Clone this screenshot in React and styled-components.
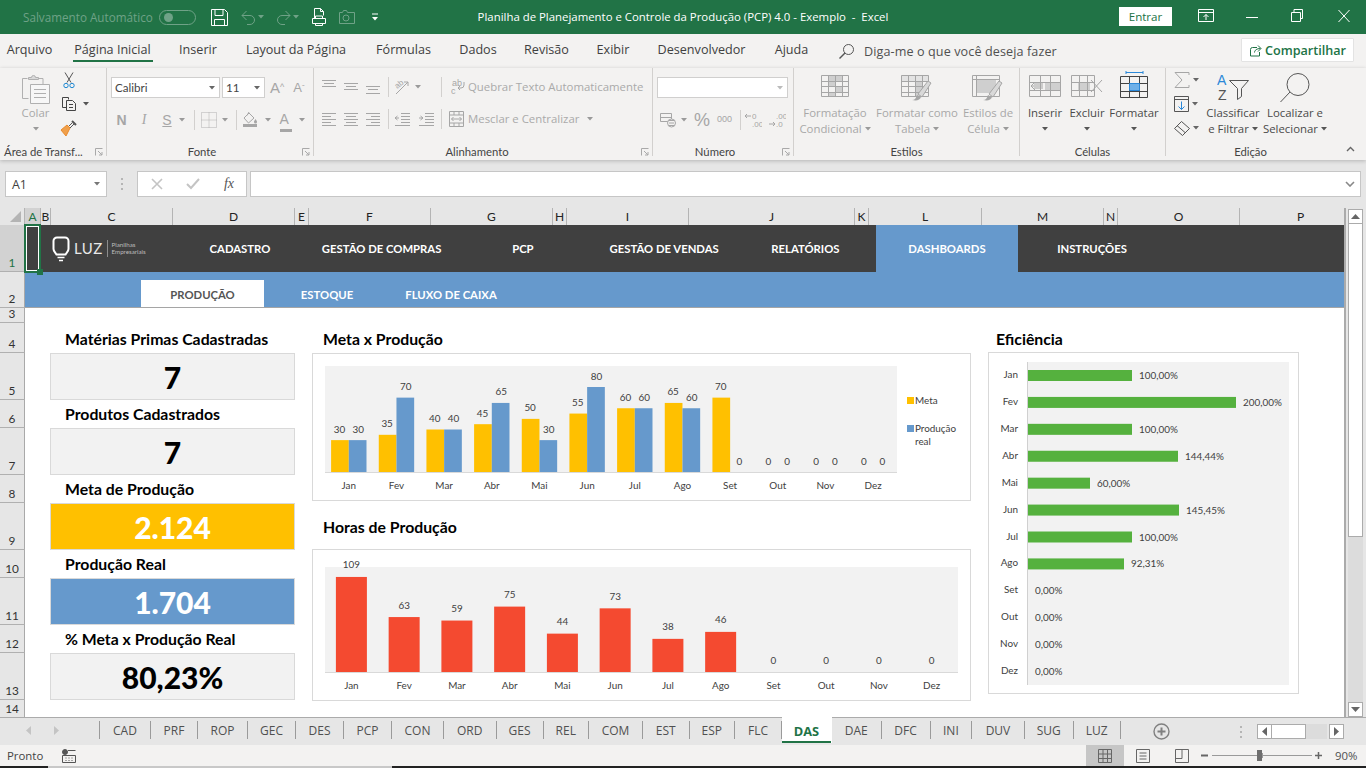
import React from 'react';
import styled, { createGlobalStyle } from 'styled-components';

const UI = `"Open Sans", "Liberation Sans", sans-serif`;
const CAL = `Lato, "Liberation Sans", sans-serif`;
const GREEN = '#217346';
const DIM = '#a6a6a6';
const DK = '#444444';
const BLUE = '#6699cc';

const Global = createGlobalStyle`
  html, body { margin: 0; padding: 0; width: 1366px; height: 768px; overflow: hidden; background: #fff; }
  * { box-sizing: border-box; }
`;
const Page = styled.div`
  width: 1366px; height: 768px; display: flex; flex-direction: column; overflow: hidden;
  font-family: ${UI}; color: ${DK};
`;

/* ---------- title bar ---------- */
const TitleBar = styled.div`
  height: 34px; flex: none; background: ${GREEN}; display: flex; align-items: center; position: relative; color: #fff;
`;
const AutoSave = styled.span`
  margin-left: 23px; width: 136px; font-size: 11.7px; color: #6fa287; white-space: nowrap;
`;
const Toggle = styled.span`
  width: 37px; height: 15px; border: 1px solid #6fa287; border-radius: 8px; display: flex; align-items: center; padding-left: 4px;
  &::before { content: ''; width: 9px; height: 9px; border-radius: 50%; background: #6fa287; }
`;
const Slot = styled.span`
  width: ${p => p.$w}px; margin-left: ${p => p.$ml || 0}px; flex: none; display: flex; align-items: center; justify-content: center;
`;
const DocTitle = styled.span`
  position: absolute; left: 0; right: 0; top: 0; height: 32px; display: flex; align-items: center; justify-content: center;
  font-size: 11.4px; white-space: pre; pointer-events: none;
`;
const Signin = styled.span`
  position: absolute; left: 1119px; top: 7px; width: 53px; height: 19px; background: #fff; color: ${GREEN};
  font-size: 11.6px; display: flex; align-items: center; justify-content: center;
`;
const WinBtn = styled.span`
  position: absolute; left: ${p => p.$x}px; top: 9px; display: flex;
`;

/* ---------- menu tabs ---------- */
const Menu = styled.div`
  height: 34px; flex: none; background: #f3f2f1; display: flex; align-items: center; position: relative;
`;
const MenuTab = styled.span`
  width: ${p => p.$w}px; flex: none; font-size: 12.6px; text-align: center; white-space: nowrap; color: #404040; position: relative; height: 34px; line-height: 31px;
  ${p => p.$active && `&::after { content: ''; position: absolute; left: 14px; right: 13px; bottom: 6px; height: 2px; background: ${GREEN}; }`}
`;
const Tell = styled.span`
  font-size: 12.6px; letter-spacing: .1px; color: #505050; margin-left: 10px; line-height: 31px; white-space: nowrap;
`;
const Share = styled.span`
  position: absolute; left: 1241px; top: 4px; width: 113px; height: 24px; background: #fff; border: 1px solid #e3e3e3; border-radius: 1px;
  color: ${GREEN}; font-size: 12.6px; font-weight: 600; display: flex; align-items: center; gap: 3px; padding-left: 7px; white-space: nowrap;
`;

/* ---------- ribbon ---------- */
const Ribbon = styled.div`
  height: 92px; flex: none; background: #f3f2f1; display: flex; padding-bottom: 4px;
  box-shadow: 0 1px 4px rgba(0,0,0,.22); position: relative; z-index: 2;
`;
const Group = styled.div`
  width: ${p => p.$w}px; flex: none; display: flex; flex-direction: column; position: relative;
  border-right: 1px solid ${p => (p.$last ? 'transparent' : '#d2d0ce')};
`;
const GroupBody = styled.div`
  height: 77px; flex: none; display: flex;
`;
const Rows = styled.div`
  display: flex; flex-direction: column; padding-left: ${p => p.$pl || 0}px; padding-top: ${p => p.$pt ?? 9}px;
`;
const Row = styled.div`
  display: flex; align-items: center; height: ${p => p.$h || 21}px; margin-bottom: ${p => p.$mb || 0}px; white-space: nowrap;
`;
const GroupLabel = styled.div`
  height: 14px; flex: none; font-family: ${CAL}; font-size: 11.3px; line-height: 14px; text-align: ${p => p.$left ? 'left' : 'center'};
  color: #444; padding-left: ${p => p.$left ? 4 : 0}px; padding-right: ${p => p.$pr || 0}px; white-space: nowrap;
`;
const Launcher = styled.span`
  position: absolute; right: 3px; bottom: 0; display: flex;
`;
const Combo = styled.span`
  width: ${p => p.$w}px; height: 21px; flex: none; background: #fff; border: 1px solid #d0cfce; margin-left: ${p => p.$ml || 0}px;
  display: flex; align-items: center; justify-content: space-between; padding: 0 4px 0 3px;
  font-family: ${CAL}; font-size: 11.6px; color: #444;
`;
const RVSep = styled.span`
  width: 1px; height: 20px; flex: none; background: #d2d0ce; margin-left: ${p => p.$ml || 0}px;
`;
const BigCol = styled.div`
  width: ${p => p.$w}px; flex: none; display: flex; flex-direction: column; align-items: center; padding-top: 4px;
  padding-left: ${p => p.$pl || 0}px;
`;
const IconBox = styled.div`
  height: 33px; display: flex; align-items: flex-start; justify-content: center; flex: none;
  padding-top: ${p => Math.max(p.$pt || 0, 0)}px; margin-top: ${p => Math.min(p.$pt || 0, 0)}px;
  margin-bottom: ${p => -Math.min(p.$pt || 0, 0)}px;
`;
const BigLabel = styled.div`
  height: 16px; line-height: 16px; font-size: 11.4px; white-space: nowrap; color: ${p => p.$dim ? '#a8a8a8' : '#4a4a4a'};
  display: flex; align-items: center; justify-content: center; gap: 3px;
`;
const RText = styled.span`
  font-size: 11.4px; color: #aaaaaa; white-space: nowrap; margin-left: ${p => p.$ml || 0}px;
`;
const Glyph = styled.span`
  font-family: ${p => p.$serif ? '"Liberation Serif", serif' : '"Liberation Sans", sans-serif'};
  font-size: ${p => p.$s || 14}px; font-weight: ${p => p.$b ? 700 : 400}; font-style: ${p => p.$i ? 'italic' : 'normal'};
  color: #a6a6a6; text-decoration: ${p => p.$u ? 'underline' : 'none'}; line-height: 1;
`;
const SmallCol = styled.div`
  display: flex; flex-direction: column; width: ${p => p.$w}px; flex: none;
`;
const SmallRow = styled.div`
  height: ${p => p.$h || 24}px; display: flex; align-items: center; justify-content: center; gap: 3px; padding-left: ${p => p.$pl || 0}px;
`;
const Collapse = styled.span`
  position: absolute; right: 11px; bottom: 8px; display: flex;
`;

/* ---------- formula bar ---------- */
const FormulaBar = styled.div`
  height: 48px; flex: none; background: #e6e6e6; display: flex; align-items: flex-start; padding: 11px 5px 0;
`;
const NameBox = styled.div`
  width: 102px; height: 26px; background: #fff; border: 1px solid #c6c6c6; display: flex; align-items: center; justify-content: space-between;
  padding: 0 6px; font-size: 12.4px; color: #404040;
`;
const Dots = styled.span`
  width: 30px; height: 26px; display: flex; align-items: center; justify-content: center;
`;
const FxBox = styled.div`
  width: 110px; height: 26px; background: #fff; border: 1px solid #c6c6c6; display: flex; align-items: center;
`;
const FInput = styled.div`
  width: 1111px; height: 26px; margin-left: 3px; background: #fff; border: 1px solid #c6c6c6; display: flex; align-items: center; justify-content: flex-end; padding-right: 5px;
`;
const Fx = styled.span`
  font-family: "Liberation Serif", serif; font-style: italic; font-size: 14px; color: #555;
`;

/* ---------- sheet ---------- */
const SheetArea = styled.div`
  height: 509px; flex: none; display: flex; background: #e6e6e6;
`;
const SheetMain = styled.div`
  width: 1346px; flex: none; display: flex; flex-direction: column; border-right: 2px solid #ababab; overflow: hidden;
`;
const ColHeads = styled.div`
  height: 17px; flex: none; display: flex; background: #e6e6e6; overflow: hidden;
`;
const Corner = styled.span`
  width: 25px; flex: none; display: flex; align-items: flex-end; justify-content: flex-end; padding: 0 3px 3px 0; border-right: 1px solid #b4b4b4;
`;
const ColHead = styled.span`
  width: ${p => p.$w}px; flex: none; text-align: center; font-family: ${CAL}; font-size: 12px; line-height: 17px;
  color: ${p => p.$active ? GREEN : '#222'}; background: ${p => p.$active ? '#d2d2d2' : 'transparent'};
  border-right: 1px solid #b4b4b4;
`;
const SheetBody = styled.div`
  flex: 1; display: flex; min-height: 0; border-top: 1px solid #9c9c9c;
`;
const RowHeads = styled.div`
  width: 25px; flex: none; display: flex; flex-direction: column; margin-top: -1px;
`;
const RowHead = styled.div`
  height: ${p => p.$h}px; flex: none; border-bottom: 1px solid #b0b0b0; border-right: 1px solid #a9a9a9;
  display: flex; align-items: flex-end; justify-content: center; padding-bottom: 1px;
  font-family: ${CAL}; font-size: 11.8px; line-height: 14px; color: ${p => p.$active ? GREEN : '#333'};
  background: ${p => p.$active ? '#d2d2d2' : '#e6e6e6'};
  &:last-child { border-bottom: none; }
`;
const Canvas = styled.div`
  flex: 1; background: #fff; position: relative; display: flex; flex-direction: column; margin-top: -1px;
`;
const NavBar = styled.div`
  height: 47px; flex: none; background: #404040; display: flex; align-items: center;
`;
const LogoCell = styled.div`
  width: 144px; height: 47px; flex: none; display: flex; align-items: center; padding-left: 27px; color: #fff;
`;
const LogoName = styled.span`
  font-family: ${CAL}; font-size: 15px; letter-spacing: .4px; color: #e8e8e8; margin-left: 4px; margin-top: -2px;
`;
const LogoSub = styled.span`
  font-family: ${CAL}; font-size: 6.2px; line-height: 6.4px; color: #bdbdbd; border-left: 1px solid #8c8c8c; margin-left: 4px; padding: 2px 0 2px 4px;
`;
const NavItem = styled.div`
  width: ${p => p.$w || 141.25}px; flex: none; height: 47px; display: flex; align-items: center; justify-content: center;
  font-family: ${CAL}; font-weight: 700; font-size: 11.3px; color: #fff; white-space: nowrap;
  background: ${p => p.$active ? BLUE : 'transparent'};
`;
const SubBar = styled.div`
  height: 36px; flex: none; background: ${BLUE}; display: flex; align-items: flex-end; padding-left: 116px;
  border-bottom: 1px solid #a5a5a5;
`;
const SubTab = styled.div`
  width: ${p => p.$w}px; height: 27px; flex: none; display: flex; align-items: center; justify-content: center;
  font-family: ${CAL}; font-weight: 700; font-size: 11.3px; padding-top: 2px;
  background: ${p => p.$active ? '#fff' : 'transparent'}; color: ${p => p.$active ? '#555' : '#fff'};
`;
const Dash = styled.div`
  flex: 1; display: flex; padding-top: 17px; align-items: flex-start; min-height: 0;
`;
const LeftCol = styled.div`
  width: 245px; margin-left: 25px; flex: none; display: flex; flex-direction: column;
`;
const KpiTitle = styled.div`
  height: 28px; line-height: 28px; padding-left: 15px; font-family: ${CAL}; font-weight: 700; font-size: 15.8px; color: #000; white-space: nowrap;
`;
const Kpi = styled.div`
  height: 47px; background: ${p => p.$bg || '#f2f2f2'}; border: 1px solid #d9d9d9; display: flex; align-items: center; justify-content: center;
  font-family: ${CAL}; font-weight: 900; font-size: 30px; color: ${p => p.$light ? '#fff' : '#000'};
`;
const MidCol = styled.div`
  width: 659px; margin-left: 17px; flex: none; display: flex; flex-direction: column;
`;
const RightCol = styled.div`
  width: 311px; margin-left: 17px; flex: none; display: flex; flex-direction: column;
`;
const ChartTitle = styled.div`
  height: ${p => p.$h || 28}px; line-height: 28px; padding-left: ${p => p.$pl}px; margin-top: ${p => p.$mt || 0}px; margin-bottom: ${p => p.$mb || 0}px;
  font-family: ${CAL}; font-weight: 700; font-size: 15.8px; color: #000; white-space: nowrap;
`;
const ChartFrame = styled.div`
  height: ${p => p.$h}px; flex: none; border: 1px solid #d9d9d9; background: #fff;
`;
const ChartSvg = styled.svg`
  display: block;
  text { font-family: ${CAL}; font-size: 9.9px; fill: #404040; }
`;
const Selection = styled.div`
  position: absolute; left: -1px; top: -1px; width: 17px; height: 49px; border: 2px solid ${GREEN}; pointer-events: none;
  &::before { content: ''; position: absolute; inset: 0; border: 1px solid #fff; }
  &::after { content: ''; position: absolute; right: -4px; bottom: -4px; width: 6px; height: 6px; background: ${GREEN}; }
`;

/* vertical scrollbar */
const VScroll = styled.div`
  flex: 1; display: flex; flex-direction: column; padding: 1px 3px 0 2px;
`;
const VBtn = styled.div`
  height: 15px; flex: none; background: #fff; border: 1px solid #ababab; display: flex; align-items: center; justify-content: center;
`;
const VThumb = styled.div`
  height: 313px; flex: none; background: #fff; border: 1px solid #ababab; border-top: none;
`;
const VTrack = styled.div`
  flex: 1; background: #dcdcdc;
`;

/* ---------- sheet tabs ---------- */
const TabStrip = styled.div`
  height: 28px; flex: none; background: #e6e6e6; border-top: 1px solid #ababab; display: flex; align-items: stretch; position: relative;
`;
const TabArrows = styled.div`
  width: 100px; flex: none; display: flex; align-items: center; padding-left: 26px; gap: 23px; border-right: 1px solid #9a9a9a; margin: 3px 0 6px;
`;
const SheetTab = styled.div`
  width: ${p => p.$w}px; flex: none; display: flex; align-items: center; justify-content: center;
  font-size: ${p => p.$active ? 12.8 : 12}px; white-space: nowrap;
  margin: ${p => p.$active ? '-1px 0 2px' : '3px 0 6px'};
  border-right: 1px solid ${p => p.$active ? 'transparent' : '#9a9a9a'};
  color: ${p => p.$active ? GREEN : '#505050'}; font-weight: ${p => p.$active ? 700 : 400};
  background: ${p => p.$active ? '#fff' : 'transparent'};
  box-shadow: ${p => p.$active ? `inset 0 -2px 0 ${GREEN}` : 'none'};
  padding-top: ${p => p.$active ? 2 : 0}px;
`;
const TabExtras = styled.div`
  display: flex; align-items: center; flex: 1; padding-left: 32px;
`;
const HScroll = styled.div`
  display: flex; align-items: center; margin-left: 67px;
`;
const HBtn = styled.span`
  width: 15px; height: 15px; background: #fff; border: 1px solid #ababab; display: flex; align-items: center; justify-content: center; flex: none;
`;
const HThumb = styled.span`
  width: 34px; height: 15px; background: #fff; border: 1px solid #ababab; border-left: none; flex: none;
`;
const HTrack = styled.span`
  width: 21px; height: 15px; background: #dcdcdc; margin-right: 2px; flex: none;
`;

/* ---------- status bar ---------- */
const StatusBar = styled.div`
  height: 21px; flex: none; background: #f3f2f1; display: flex; align-items: center; position: relative;
`;
const Ready = styled.span`
  margin-left: 7px; width: 55px; font-size: 11.4px; color: #444;
`;
const ViewBtn = styled.span`
  width: ${p => p.$w}px; margin-left: ${p => p.$ml || 0}px; height: 21px; display: flex; align-items: center; justify-content: center;
  background: ${p => p.$on ? '#c6c6c6' : 'transparent'}; flex: none;
`;
const ZoomTrack = styled.span`
  width: 100px; height: 1px; background: #9a9a9a; margin: 0 3px 0 4px; position: relative; flex: none;
  &::before { content: ''; position: absolute; left: 45px; top: -5px; width: 5px; height: 11px; background: #6e6e6e; }
  &::after { content: ''; position: absolute; left: 50px; top: -2px; width: 1px; height: 5px; background: #9a9a9a; }
`;
const ZoomPct = styled.span`
  font-size: 11.4px; color: #505050; margin-left: 13px;
`;
const BottomEdge = styled.div`
  height: 2px; flex: none; display: flex; background: #222;
`;
const EdgePart = styled.span`
  width: ${p => p.$w}px; background: ${p => p.$c}; flex: none;
`;

/* ---------- icons ---------- */
const S = ({ w, h, c = DIM, sw = 1, children, fill = 'none' }) => (
  <svg width={w} height={h} viewBox={`0 0 ${w} ${h}`} fill={fill} stroke={c} strokeWidth={sw} style={{ display: 'block', flex: 'none' }}>{children}</svg>
);
const Caret = ({ c = '#9a9a9a' }) => (
  <svg width="6" height="4" viewBox="0 0 6 4" style={{ display: 'block', flex: 'none' }}><path d="M0 0h6L3 3.5z" fill={c} /></svg>
);
const Launch = () => (
  <S w={8} h={8} c="#a9a9a9"><path d="M.5 7.5v-7h7M3 3l4 4M7 4v3H4" /></S>
);
const SaveI = () => (
  <S w={17} h={17} c="#fff"><path d="M.5.5h13l3 3v13H.5zM4 .5v6h8v-6M3.5 16.5v-6h10v6" /></S>
);
const UndoI = ({ flip }) => (
  <S w={15} h={17} c="#6fa287"><g transform={flip ? 'translate(15 0) scale(-1 1)' : ''}><path d="M5.5 2 1 6.5 5.5 11M1 6.5h8a4.5 4.5 0 0 1 0 9H6" /></g></S>
);
const PrintI = () => (
  <S w={15} h={18} c="#fff"><path d="M2.500 10V.5h6l3 3v4M8.500.5v3h3M.5 15.500v-5h13v5zM3.500 15.500v2h7v-2M3.500 10.500V8h7v2.500" /></S>
);
const CamI = () => (
  <S w={16} h={16} c="#6fa287"><path d="M.5 3.5h3l1-2h3l1 2h7v11H.5z" /><circle cx="7" cy="9" r="3" /></S>
);
const QatI = () => (
  <S w={6} h={8} c="#fff"><path d="M0 1h6" /><path d="M0 4h6L3 7.5z" fill="#fff" stroke="none" /></S>
);
const Gbar = ({ w = 14, h = 3 }) => <span style={{ display: 'block', width: w, height: h, background: '#a6a6a6' }} />;

const Lines = ({ rows, w = 14, h = 15 }) => (
  <S w={w} h={h} c="#a6a6a6">{rows.map(([y, a, b], i) => <path key={i} d={`M${a} ${y}.5H${b}`} />)}</S>
);
const vTop = [[1, 0, 14], [4, 2, 12], [7, 0, 14]];
const vMid = [[4, 0, 14], [7, 2, 12], [10, 0, 14]];
const vBot = [[7, 0, 14], [10, 2, 12], [14, 0, 14]];
const hL = [[2, 0, 14], [5, 0, 9], [8, 0, 14], [11, 0, 9], [14, 0, 14]];
const hC = [[2, 0, 14], [5, 2, 12], [8, 0, 14], [11, 2, 12], [14, 0, 14]];
const hR = [[2, 0, 14], [5, 5, 14], [8, 0, 14], [11, 5, 14], [14, 0, 14]];

const Indent = ({ rev }) => (
  <S w={15} h={15} c="#a6a6a6"><path d="M6 2.500h9M6 5.500h9M6 8.500h9M6 11.500h9M0 14.500h15" /><path d={rev ? 'M0 7h4M1.500 5 4 7 1.500 9' : 'M4 7H0M2.500 5 0 7l2.500 2'} /></S>
);
const PasteI = () => (
  <S w={28} h={30} c="#b0b0b0">
    <path d="M6.500 24.500H.5V4.500h5M16 4.500h5v6" />
    <path d="M6.500 5.500v-2h3a2 2 0 0 1 4 0h3v2z" fill="#d9d9d9" />
    <path d="M8.500 10.500h19v19h-19z" fill="#f7f7f7" />
    <path d="M12 15.500h12M12 19.500h12M12 23.500h12" />
  </S>
);
const CutI = () => (
  <S w={12} h={17} c="#555"><path d="M2 .5 8 10.500M10 .5 4 10.500" /><g stroke="#1e88d2"><circle cx="3" cy="13.500" r="2.200" /><circle cx="9" cy="13.500" r="2.200" /></g></S>
);
const CopyI = () => (
  <S w={15} h={14} c="#444"><path d="M5 10.500H.5v-10h6v2" /><path d="M4.500 3.500h6l3 3v7h-9z" fill="#f3f2f1" /><path d="M7 7.500h4M7 10.500h4" /></S>
);
const BrushI = () => (
  <S w={18} h={17}><path d="M10 8l-3-3-6 5 5 6z" fill="#f0a04b" stroke="#e88a2c" /><path d="M9 6l3-3M10 8l5-5" stroke="#555" /><path d="M12 1l4 4" stroke="#555" strokeWidth="2" /></S>
);
const BorderI = () => (
  <S w={16} h={16} c="#b0b0b0"><path d="M.5.5h15v15H.5z" strokeDasharray="1 1" /><path d="M8 .5v15M.5 8h15" strokeDasharray="1 1" /></S>
);
const BucketI = () => (
  <S w={15} h={12} c="#a6a6a6"><path d="M6 1 1 6l4.500 5L11 6zM4 3.500 6 0" /><path d="M12.500 7c1 1.500 1.500 2 1.500 3a1.500 1.500 0 0 1-3 0c0-1 .5-1.500 1.500-3z" fill="#a6a6a6" stroke="none" /></S>
);
const OrientI = () => (
  <S w={16} h={16} c="#a6a6a6"><text x="1" y="8" transform="rotate(-40 5 6)" fontSize="8" fill="#a6a6a6" stroke="none" fontFamily="Liberation Sans">ab</text><path d="M2 15 14 3M14 3H10M14 3v4" /></S>
);
const WrapI = () => (
  <S w={15} h={17} c="#a6a6a6"><text x="1" y="7.500" fontSize="9" fill="#a6a6a6" stroke="none" fontFamily="Liberation Sans">ab</text><text x="0" y="15.500" fontSize="9" fill="#a6a6a6" stroke="none" fontFamily="Liberation Sans">c</text><path d="M13 4v3a3 3 0 0 1-3 3H7M9 8 7 10l2 2" /></S>
);
const MergeI = () => (
  <S w={15} h={16} c="#a6a6a6"><path d="M.5.5h14v15H.5zM.5 4h14M.5 12h14M5 .5V4M10 .5V4M5 12v3.500M10 12v3.500M2.500 8h10M4.500 6 2.500 8l2 2M10.500 6l2 2-2 2" /></S>
);
const AccI = () => (
  <S w={18} h={16} c="#a6a6a6"><path d="M.5 1.500h11v8H.5zM.5 5.500h11" /><circle cx="11.500" cy="11" r="4" fill="#f3f2f1" /><path d="M9 8.500h5M9 11h5M9 13.500h5" /></S>
);
const DecI = ({ more }) => (
  <S w={17} h={18} c="#a6a6a6">
    <text x="7" y="7.500" fontSize="8" fill="#a6a6a6" stroke="none" fontFamily="Liberation Sans">{more ? '.00' : '0'}</text>
    <text x="7" y="16" fontSize="8" fill="#a6a6a6" stroke="none" fontFamily="Liberation Sans">{more ? '.0' : '.00'}</text>
    <path d={more ? 'M0 13h6M4 11l2 2-2 2' : 'M6 5H0M2 3 0 5l2 2'} />
  </S>
);
const GridBase = ({ c = '#a6a6a6', w = 28, h = 22, cols = 4, rows = 4, sw = 1 }) => (
  <>
    <path d={`M.5.5H${w - .5}V${h - .5}H.5z`} stroke={c} strokeWidth={sw} />
    {Array.from({ length: cols - 1 }, (_, i) => <path key={'c' + i} d={`M${Math.round((w / cols) * (i + 1)) + .5} 0V${h}`} stroke={c} />)}
    {Array.from({ length: rows - 1 }, (_, i) => <path key={'r' + i} d={`M0 ${Math.round((h / rows) * (i + 1)) + .5}H${w}`} stroke={c} />)}
  </>
);
const Shade = ({ x, y, w, h, c = '#cfcfcf' }) => <rect x={x} y={y} width={w} height={h} fill={c} stroke="none" />;
const CondI = () => (
  <S w={28} h={23}><Shade x={7} y={0} w={14} h={6} /><Shade x={7} y={6} w={7} h={5} /><Shade x={14} y={11} w={7} h={6} /><Shade x={7} y={17} w={7} h={5} /><GridBase /></S>
);
const BrushOver = ({ x = 0 }) => (
  <g transform={`translate(${x} 0)`}>
    <path d="M14 19 24 6l3 2-9 14z" fill="#d9d9d9" stroke="#a6a6a6" />
    <path d="M8 25c3 0 4-2 5-5l4 2c-1 3-4 4-9 3z" fill="#a6a6a6" stroke="none" />
  </g>
);
const TableI = () => (
  <S w={32} h={27}><Shade x={0} y={0} w={28} h={6} c="#e3e3e3" /><Shade x={14} y={6} w={7} h={16} /><GridBase /><BrushOver x={3} /></S>
);
const CellStyleI = () => (
  <S w={32} h={27}><Shade x={4} y={4} w={20} h={14} /><GridBase cols={1} rows={1} /><path d="M.5 4.500h27M4.500 0v22" stroke="#a6a6a6" /><BrushOver x={3} /></S>
);
const InsertI = () => (
  <S w={32} h={23}><Shade x={16} y={7} w={16} h={8} /><GridBase w={32} cols={3} rows={3} /><path d="M14 11H2M6 7l-4 4 4 4M14 9H5M14 13H5" stroke="#a6a6a6" fill="#f3f2f1" /></S>
);
const DeleteI = () => (
  <S w={32} h={23}><Shade x={7} y={7} w={12} h={8} /><GridBase w={24} cols={3} rows={3} /><path d="M20 5l11 12M31 5 20 17" stroke="#a6a6a6" /></S>
);
const FormatI = () => (
  <S w={29} h={28}>
    <path d="M6 1.500h17M6 0v3M23 0v3" stroke="#2b88d8" />
    <Shade x={10} y={12} w={10} h={8} c="#6fb0e8" />
    <g transform="translate(0 5)"><GridBase w={28} h={22} cols={3} rows={3} c="#444" /></g>
    <path d="M9.500 12.500h10v7h-10z" stroke="#2b88d8" />
  </S>
);
const SigmaI = () => (
  <S w={16} h={16} c="#a6a6a6"><path d="M15 3V.5H1L8 8l-7 7.500h14V13" /></S>
);
const FillI = () => (
  <S w={15} h={16} c="#555"><path d="M.5.5h14v15H.5zM.5 3.500h14" /><path d="M7.500 5.500v8M4.500 10.500l3 3 3-3" stroke="#2b88d8" /></S>
);
const ClearI = () => (
  <S w={17} h={15} c="#555"><path d="M8.500 .5l8 7-7 7-8-7z" /><path d="M4 4.500l8 7" /></S>
);
const SortI = () => (
  <S w={32} h={30} c="#555">
    <text x="0" y="12" fontSize="14" fill="#2b88d8" stroke="none" fontFamily="Liberation Sans">A</text>
    <text x="1" y="27" fontSize="14" fill="#555" stroke="none" fontFamily="Liberation Sans">Z</text>
    <path d="M12.500 7.500h19l-7 8v8l-4 3v-11z" />
  </S>
);
const FindI = ({ big }) => big ? (
  <S w={30} h={30} c="#555"><circle cx="18" cy="11.500" r="11" /><path d="M10 19 .5 29" /></S>
) : (
  <S w={15} h={15} c="#555"><circle cx="9.500" cy="5.500" r="5" /><path d="M6 9 .5 14.500" strokeWidth="1.400" /></S>
);
const ShareI = () => (
  <S w={13} h={13} c={GREEN}><path d="M8 3.500H3.500a2 2 0 0 0-2 2V12h9V8M5.500 8.500c0-2 2-4 6-4M9 1.500l3 3-3 3" /></S>
);
const RibbonI = () => (
  <S w={16} h={13} c="#fff"><path d="M.5.5h15v12H.5zM.5 3.500h15M8 11V5.500M5.500 8 8 5.500 10.500 8" /></S>
);
const MinI = () => <S w={12} h={16} c="#fff"><path d="M0 8.500h12" /></S>;
const RestI = () => <S w={12} h={14} c="#fff"><path d="M.5 3.500h9v9h-9zM3 3.500v-3h8.500v9h-2" /></S>;
const CloseI = () => <S w={12} h={14} c="#fff"><path d="M.5 1l11 12M11.500 1l-11 12" /></S>;
const Dotted = () => <S w={3} h={12} c="#b5b5b5" sw={2}><path d="M1 0v2M1 5v2M1 10v2" /></S>;

/* ---------- data ---------- */
const months = ['Jan', 'Fev', 'Mar', 'Abr', 'Mai', 'Jun', 'Jul', 'Ago', 'Set', 'Out', 'Nov', 'Dez'];
const meta = [30, 35, 40, 45, 50, 55, 60, 65, 70, 0, 0, 0];
const real = [30, 70, 40, 65, 30, 80, 60, 60, 0, 0, 0, 0];
const hours = [109, 63, 59, 75, 44, 73, 38, 46, 0, 0, 0, 0];
const eff = [['100,00%', 104], ['200,00%', 208], ['100,00%', 104], ['144,44%', 150], ['60,00%', 62], ['145,45%', 151], ['100,00%', 104], ['92,31%', 96], ['0,00%', 0], ['0,00%', 0], ['0,00%', 0], ['0,00%', 0]];
const cols = [['A', 16, true], ['B', 10], ['C', 122], ['D', 122], ['E', 14], ['F', 122], ['G', 122], ['H', 14], ['I', 122], ['J', 166], ['K', 14], ['L', 113], ['M', 122], ['N', 14], ['O', 122], ['P', 122]];
const rowsH = [47, 36, 15, 30, 47, 28, 47, 28, 47, 28, 47, 28, 47, 17];
const tabs = [['CAD', 51], ['PRF', 47], ['ROP', 50], ['GEC', 48], ['DES', 48], ['PCP', 48], ['CON', 52], ['ORD', 52.5], ['GES', 47], ['REL', 45.5], ['COM', 54], ['EST', 46.5], ['ESP', 45.5], ['FLC', 47], ['DAS', 50, true], ['DAE', 49.6], ['DFC', 49], ['INI', 41.6], ['DUV', 52.5], ['SUG', 49], ['LUZ', 47]];
const menu = [['Arquivo', 59], ['Página Inicial', 107, true], ['Inserir', 64], ['Layout da Página', 132], ['Fórmulas', 83], ['Dados', 66], ['Revisão', 71], ['Exibir', 62], ['Desenvolvedor', 115], ['Ajuda', 65]];

const MetaChart = () => {
  const bw = 17.7, step = 572 / 12, y0 = 472, k = 1.0625;
  return (
    <ChartSvg width="657" height="146" viewBox="313 354 657 146">
      <rect x="325" y="366" width="572" height="106" fill="#f2f2f2" />
      <rect x="325" y="472" width="572" height="1" fill="#d9d9d9" />
      {months.map((m, i) => {
        const c = 348.8 + step * i;
        return (
          <g key={m}>
            <rect x={c - bw} y={y0 - meta[i] * k} width={bw} height={meta[i] * k} fill="#ffc000" />
            <rect x={c} y={y0 - real[i] * k} width={bw} height={real[i] * k} fill={BLUE} />
            <text x={c - bw / 2 - .5} y={y0 - meta[i] * k - 7.5} textAnchor="middle">{meta[i]}</text>
            <text x={c + bw / 2 + .5} y={y0 - real[i] * k - 7.5} textAnchor="middle">{real[i]}</text>
            <text x={c} y="489" textAnchor="middle">{m}</text>
          </g>
        );
      })}
      <rect x="907" y="397" width="7" height="7" fill="#ffc000" />
      <text x="915" y="404">Meta</text>
      <rect x="907" y="425" width="7" height="7" fill={BLUE} />
      <text x="915" y="432">Produção</text>
      <text x="915" y="445">real</text>
    </ChartSvg>
  );
};
const HoursChart = () => {
  const step = 633 / 12, y0 = 672, k = .872, bw = 31;
  return (
    <ChartSvg width="657" height="150" viewBox="313 550 657 150">
      <rect x="325" y="567" width="633" height="105" fill="#f2f2f2" />
      <rect x="325" y="672" width="633" height="1" fill="#d9d9d9" />
      {months.map((m, i) => {
        const c = 351.4 + step * i;
        return (
          <g key={m}>
            <rect x={c - bw / 2} y={y0 - hours[i] * k} width={bw} height={hours[i] * k} fill="#f44a30" />
            <text x={c} y={y0 - hours[i] * k - 8.5} textAnchor="middle">{hours[i]}</text>
            <text x={c} y="689" textAnchor="middle">{m}</text>
          </g>
        );
      })}
    </ChartSvg>
  );
};
const EffChart = () => {
  const step = 323 / 12;
  return (
    <ChartSvg width="309" height="340" viewBox="989 353 309 340">
      <rect x="1027" y="362" width="262" height="323" fill="#f2f2f2" />
      <rect x="1027" y="362" width="1" height="323" fill="#d0d0d0" />
      {months.map((m, i) => {
        const c = 375.5 + step * i;
        const [lab, w] = eff[i];
        return (
          <g key={m}>
            <rect x="1028" y={c - 5.5} width={w} height="11" fill="#55b13e" />
            <text x="1018" y={c + 2.5} textAnchor="end">{m}</text>
            <text x={1035 + w} y={c + 3.5}>{lab}</text>
          </g>
        );
      })}
    </ChartSvg>
  );
};

export default function App() {
  return (
    <Page>
      <Global />
      <TitleBar>
        <AutoSave>Salvamento Automático</AutoSave>
        <Toggle />
        <Slot $w={17} $ml={15}><SaveI /></Slot>
        <Slot $w={15} $ml={13}><UndoI /></Slot>
        <Slot $w={6} $ml={2}><Caret c="#6fa287" /></Slot>
        <Slot $w={15} $ml={12}><UndoI flip /></Slot>
        <Slot $w={6} $ml={2}><Caret c="#6fa287" /></Slot>
        <Slot $w={15} $ml={13}><PrintI /></Slot>
        <Slot $w={16} $ml={12}><CamI /></Slot>
        <Slot $w={6} $ml={17}><QatI /></Slot>
        <DocTitle>Planilha de Planejamento e Controle da Produção (PCP) 4.0 - Exemplo  -  Excel</DocTitle>
        <Signin>Entrar</Signin>
        <WinBtn $x={1198}><RibbonI /></WinBtn>
        <WinBtn $x={1246}><MinI /></WinBtn>
        <WinBtn $x={1291}><RestI /></WinBtn>
        <WinBtn $x={1338}><CloseI /></WinBtn>
      </TitleBar>

      <Menu>
        {menu.map(([t, w, a]) => <MenuTab key={t} $w={w} $active={a}>{t}</MenuTab>)}
        <Slot $w={15} $ml={15}><FindI /></Slot>
        <Tell>Diga-me o que você deseja fazer</Tell>
        <Share><ShareI />Compartilhar</Share>
      </Menu>

      <Ribbon>
        <Group $w={107}>
          <GroupBody>
            <BigCol $w={57} $pl={14}>
              <IconBox $pt={2}><PasteI /></IconBox>
              <BigLabel $dim>Colar</BigLabel>
              <BigLabel $dim><Caret /></BigLabel>
            </BigCol>
            <SmallCol $w={24}>
              <SmallRow><CutI /></SmallRow>
              <SmallRow><CopyI /></SmallRow>
              <SmallRow><BrushI /></SmallRow>
            </SmallCol>
            <SmallCol $w={10}>
              <SmallRow />
              <SmallRow><Caret c="#555" /></SmallRow>
            </SmallCol>
          </GroupBody>
          <GroupLabel $left>Área de Transf...</GroupLabel>
          <Launcher><Launch /></Launcher>
        </Group>

        <Group $w={207}>
          <GroupBody>
            <Rows $pl={4}>
              <Row $mb={11}>
                <Combo $w={109}>Calibri<Caret c="#666" /></Combo>
                <Combo $w={43} $ml={2}>11<Caret c="#666" /></Combo>
                <Slot $w={24}><Glyph $s={15}>A</Glyph><Glyph $s={9}>^</Glyph></Slot>
                <Slot $w={20}><Glyph $s={13}>A</Glyph><Glyph $s={8}>ˇ</Glyph></Slot>
              </Row>
              <Row>
                <Slot $w={21}><Glyph $b>N</Glyph></Slot>
                <Slot $w={24}><Glyph $i $serif>I</Glyph></Slot>
                <Slot $w={22}><Glyph $u>S</Glyph></Slot>
                <Slot $w={8}><Caret /></Slot>
                <RVSep $ml={8} />
                <Slot $w={27}><BorderI /></Slot>
                <Slot $w={6}><Caret /></Slot>
                <RVSep $ml={8} />
                <Slot $w={26}><span><BucketI /><Gbar /></span></Slot>
                <Slot $w={10}><Caret /></Slot>
                <Slot $w={25}><span><Glyph $s={14}>A</Glyph><Gbar w={12} /></span></Slot>
                <Slot $w={8}><Caret /></Slot>
              </Row>
            </Rows>
          </GroupBody>
          <GroupLabel $pr={16}>Fonte</GroupLabel>
          <Launcher><Launch /></Launcher>
        </Group>

        <Group $w={339}>
          <GroupBody>
            <Rows $pl={4} $pt={8}>
              <Row $mb={11}>
                <Slot $w={22}><Lines rows={vTop} /></Slot>
                <Slot $w={22}><Lines rows={vMid} /></Slot>
                <Slot $w={22}><Lines rows={vBot} /></Slot>
                <RVSep $ml={4} />
                <Slot $w={26}><OrientI /></Slot>
                <Slot $w={6}><Caret /></Slot>
                <RVSep $ml={20} />
                <Slot $w={14} $ml={9}><WrapI /></Slot>
                <RText $ml={3}>Quebrar Texto Automaticamente</RText>
              </Row>
              <Row>
                <Slot $w={22}><Lines rows={hL} /></Slot>
                <Slot $w={22}><Lines rows={hC} /></Slot>
                <Slot $w={22}><Lines rows={hR} /></Slot>
                <RVSep $ml={4} />
                <Slot $w={26}><Indent /></Slot>
                <Slot $w={22}><Indent rev /></Slot>
                <RVSep $ml={4} />
                <Slot $w={15} $ml={7}><MergeI /></Slot>
                <RText $ml={4}>Mesclar e Centralizar</RText>
                <Slot $w={6} $ml={8}><Caret /></Slot>
              </Row>
            </Rows>
          </GroupBody>
          <GroupLabel $pr={12}>Alinhamento</GroupLabel>
          <Launcher><Launch /></Launcher>
        </Group>

        <Group $w={141}>
          <GroupBody>
            <Rows $pl={4}>
              <Row $mb={11}><Combo $w={131}><span /><Caret c="#bbb" /></Combo></Row>
              <Row>
                <Slot $w={23}><AccI /></Slot>
                <Slot $w={8}><Caret /></Slot>
                <Slot $w={28}><Glyph $s={18}>%</Glyph></Slot>
                <Slot $w={17}><Glyph $s={9}>000</Glyph></Slot>
                <RVSep $ml={7} />
                <Slot $w={25}><DecI more={false} /></Slot>
                <Slot $w={23}><DecI more /></Slot>
              </Row>
            </Rows>
          </GroupBody>
          <GroupLabel $pr={16}>Número</GroupLabel>
          <Launcher><Launch /></Launcher>
        </Group>

        <Group $w={226}>
          <GroupBody>
            <BigCol $w={82}><IconBox $pt={3}><CondI /></IconBox><BigLabel $dim>Formatação</BigLabel><BigLabel $dim>Condicional<Caret /></BigLabel></BigCol>
            <BigCol $w={82}><IconBox $pt={3}><TableI /></IconBox><BigLabel $dim>Formatar como</BigLabel><BigLabel $dim>Tabela<Caret /></BigLabel></BigCol>
            <BigCol $w={60}><IconBox $pt={3}><CellStyleI /></IconBox><BigLabel $dim>Estilos de</BigLabel><BigLabel $dim>Célula<Caret /></BigLabel></BigCol>
          </GroupBody>
          <GroupLabel>Estilos</GroupLabel>
        </Group>

        <Group $w={146}>
          <GroupBody>
            <BigCol $w={50}><IconBox $pt={3}><InsertI /></IconBox><BigLabel>Inserir</BigLabel><BigLabel><Caret c="#555" /></BigLabel></BigCol>
            <BigCol $w={34}><IconBox $pt={3}><DeleteI /></IconBox><BigLabel>Excluir</BigLabel><BigLabel><Caret c="#555" /></BigLabel></BigCol>
            <BigCol $w={60}><IconBox $pt={-1}><FormatI /></IconBox><BigLabel>Formatar</BigLabel><BigLabel><Caret c="#555" /></BigLabel></BigCol>
          </GroupBody>
          <GroupLabel>Células</GroupLabel>
        </Group>

        <Group $w={170} $last>
          <GroupBody>
            <SmallCol $w={39}>
              <SmallRow $pl={1}><SigmaI /><Caret c="#666" /></SmallRow>
              <SmallRow><FillI /><Caret c="#666" /></SmallRow>
              <SmallRow><ClearI /><Caret c="#666" /></SmallRow>
            </SmallCol>
            <BigCol $w={56}><IconBox $pt={1}><SortI /></IconBox><BigLabel>Classificar</BigLabel><BigLabel>e Filtrar<Caret c="#555" /></BigLabel></BigCol>
            <BigCol $w={68}><IconBox $pt={1}><FindI big /></IconBox><BigLabel>Localizar e</BigLabel><BigLabel>Selecionar<Caret c="#555" /></BigLabel></BigCol>
          </GroupBody>
          <GroupLabel>Edição</GroupLabel>
        </Group>
        <Collapse><S w={9} h={6} c="#666" sw={1.4}><path d="M1 5l3.500-3.500L8 5" /></S></Collapse>
      </Ribbon>

      <FormulaBar>
        <NameBox>A1<Caret c="#777" /></NameBox>
        <Dots><Dotted /></Dots>
        <FxBox>
          <Slot $w={37}><S w={12} h={12} c="#c4c4c4" sw={1.6}><path d="M1 1l10 10M11 1 1 11" /></S></Slot>
          <Slot $w={36}><S w={14} h={12} c="#c4c4c4" sw={2}><path d="M1 6l4 4 8-9" /></S></Slot>
          <Slot $w={36}><Fx>fx</Fx></Slot>
        </FxBox>
        <FInput><S w={10} h={6} c="#888" sw={1.6}><path d="M1 1l4 4 4-4" /></S></FInput>
      </FormulaBar>

      <SheetArea>
        <SheetMain>
          <ColHeads>
            <Corner><svg width="11" height="11" viewBox="0 0 11 11"><path d="M11 0v11H0z" fill="#b4b4b4" /></svg></Corner>
            {cols.map(([t, w, a]) => <ColHead key={t} $w={w} $active={a}>{t}</ColHead>)}
          </ColHeads>
          <SheetBody>
            <RowHeads>
              {rowsH.map((h, i) => <RowHead key={i} $h={h} $active={i === 0}>{i + 1}</RowHead>)}
            </RowHeads>
            <Canvas>
              <NavBar>
                <LogoCell>
                  <S w={18} h={26} c="#fff" sw={2}>
                    <path d="M5 1.500h8a3.500 3.500 0 0 1 3.500 3.500v8c0 2.500-2 3.500-3 5.500h-9c-1-2-3-3-3-5.500V5A3.500 3.500 0 0 1 5 1.500z" />
                    <path d="M5.500 21.500h7M7 24.500h4" strokeWidth="1.400" />
                  </S>
                  <LogoName>LUZ</LogoName>
                  <LogoSub>Planilhas<br />Empresariais</LogoSub>
                </LogoCell>
                <NavItem $w={142}>CADASTRO</NavItem>
                <NavItem>GESTÃO DE COMPRAS</NavItem>
                <NavItem>PCP</NavItem>
                <NavItem>GESTÃO DE VENDAS</NavItem>
                <NavItem>RELATÓRIOS</NavItem>
                <NavItem $w={142} $active>DASHBOARDS</NavItem>
                <NavItem $w={148}>INSTRUÇÕES</NavItem>
              </NavBar>
              <SubBar>
                <SubTab $w={123} $active>PRODUÇÃO</SubTab>
                <SubTab $w={126}>ESTOQUE</SubTab>
                <SubTab $w={122}>FLUXO DE CAIXA</SubTab>
              </SubBar>
              <Dash>
                <LeftCol>
                  <KpiTitle>Matérias Primas Cadastradas</KpiTitle>
                  <Kpi>7</Kpi>
                  <KpiTitle>Produtos Cadastrados</KpiTitle>
                  <Kpi>7</Kpi>
                  <KpiTitle>Meta de Produção</KpiTitle>
                  <Kpi $bg="#ffc000" $light>2.124</Kpi>
                  <KpiTitle>Produção Real</KpiTitle>
                  <Kpi $bg={BLUE} $light>1.704</Kpi>
                  <KpiTitle>% Meta x Produção Real</KpiTitle>
                  <Kpi>80,23%</Kpi>
                </LeftCol>
                <MidCol>
                  <ChartTitle $pl={11}>Meta x Produção</ChartTitle>
                  <ChartFrame $h={148}><MetaChart /></ChartFrame>
                  <ChartTitle $pl={11} $mt={12} $mb={8}>Horas de Produção</ChartTitle>
                  <ChartFrame $h={152}><HoursChart /></ChartFrame>
                </MidCol>
                <RightCol>
                  <ChartTitle $pl={8} $h={27}>Eficiência</ChartTitle>
                  <ChartFrame $h={342}><EffChart /></ChartFrame>
                </RightCol>
              </Dash>
              <Selection />
            </Canvas>
          </SheetBody>
        </SheetMain>
        <VScroll>
          <VBtn><svg width="9" height="5" viewBox="0 0 9 5"><path d="M0 5 4.500 0 9 5z" fill="#666" /></svg></VBtn>
          <VThumb />
          <VTrack />
          <VBtn><svg width="9" height="5" viewBox="0 0 9 5"><path d="M0 0 4.500 5 9 0z" fill="#666" /></svg></VBtn>
        </VScroll>
      </SheetArea>

      <TabStrip>
        <TabArrows>
          <svg width="5" height="9" viewBox="0 0 5 9"><path d="M5 0v9L0 4.500z" fill="#c4c4c4" /></svg>
          <svg width="5" height="9" viewBox="0 0 5 9"><path d="M0 0v9l5-4.500z" fill="#c4c4c4" /></svg>
        </TabArrows>
        {tabs.map(([t, w, a]) => <SheetTab key={t} $w={w} $active={a}>{t}</SheetTab>)}
        <TabExtras>
          <S w={17} h={17} c="#808080" sw={1.4}><circle cx="8.500" cy="8.500" r="7.500" /><path d="M8.500 4.500v8M4.500 8.500h8" strokeWidth="2" /></S>
          <Slot $w={3}><span /></Slot>
          <HScroll>
            <Dotted />
            <Slot $w={14}><span /></Slot>
            <HBtn><svg width="5" height="9" viewBox="0 0 5 9"><path d="M5 0v9L0 4.500z" fill="#666" /></svg></HBtn>
            <HThumb />
            <HTrack />
            <HBtn><svg width="5" height="9" viewBox="0 0 5 9"><path d="M0 0v9l5-4.500z" fill="#666" /></svg></HBtn>
          </HScroll>
        </TabExtras>
      </TabStrip>

      <StatusBar>
        <Ready>Pronto</Ready>
        <S w={14} h={14} c="#555"><circle cx="3" cy="3" r="2.500" fill="#555" /><path d="M6 1.500h7.500M.5 6.500h13v7H.5zM3.500 9h1M6.500 9h1M9.500 9h1M3.500 11.500h1M6.500 11.500h1M9.500 11.500h1" /></S>
        <ViewBtn $w={38} $ml={1010} $on><S w={14} h={14} c="#666"><path d="M.5.500h13v13H.5zM5 .500v13M9.500 .500v13M.5 5h13M.5 9.500h13" /></S></ViewBtn>
        <ViewBtn $w={38}><S w={14} h={14} c="#666"><path d="M.5.500h13v13H.5zM3.500 4h7M3.500 7h7M3.500 10h7" /></S></ViewBtn>
        <ViewBtn $w={39}><S w={14} h={14} c="#666"><path d="M.5.500h13v13H.5zM.5 9.500h6.500V.500" /></S></ViewBtn>
        <S w={7} h={3} c="#666" sw={2}><path d="M0 1.500h7" /></S>
        <ZoomTrack />
        <S w={7} h={7} c="#666" sw={1.5}><path d="M0 3.500h7M3.500 0v7" /></S>
        <ZoomPct>90%</ZoomPct>
      </StatusBar>
      <BottomEdge>
        <EdgePart $w={48} $c="#222" />
        <EdgePart $w={344} $c="#c8c8c8" />
      </BottomEdge>
    </Page>
  );
}
